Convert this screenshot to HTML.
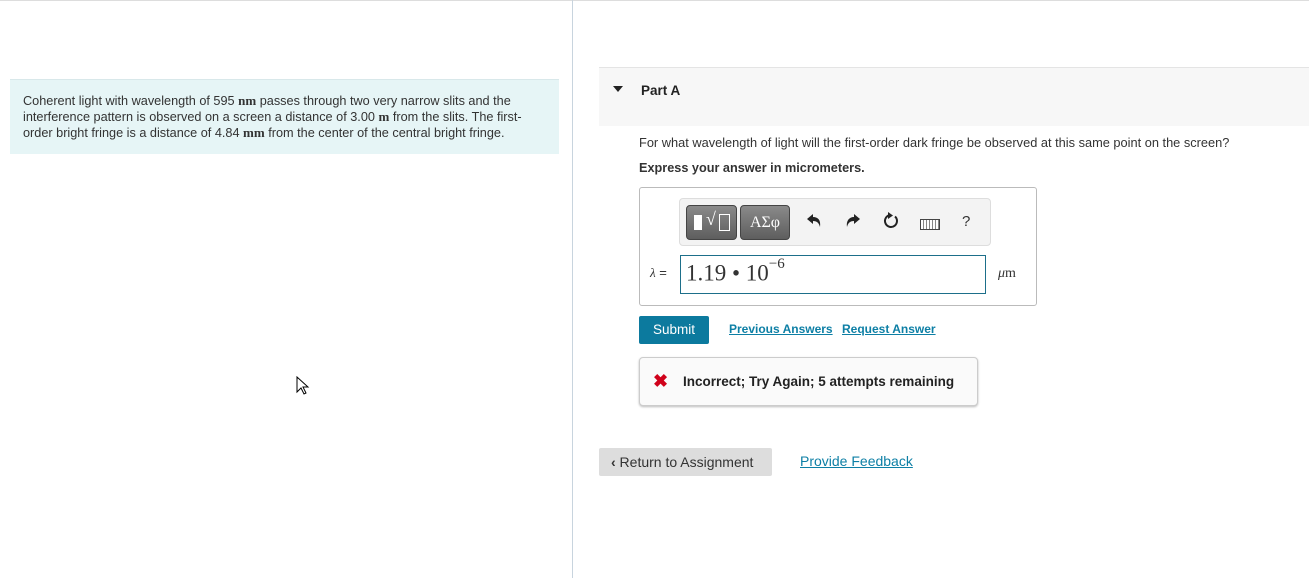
<!DOCTYPE html>
<html><head><style>
body{margin:0;width:1309px;height:578px;background:#fff;font-family:"Liberation Sans",sans-serif;position:relative;overflow:hidden}
.a{position:absolute}
.serif{font-family:"Liberation Serif",serif}
a{color:#0d7fa5;text-decoration:underline}
</style></head><body>
<div class="a" style="left:0;top:0;width:1309px;height:1px;background:#ddd"></div>
<div class="a" style="left:572px;top:0;width:1px;height:578px;background:#c8d4de"></div>
<div class="a" style="left:10px;top:79px;width:549px;height:74px;background:#e6f5f6;border-top:1px solid #d8e8ea"></div>
<div class="a" style="left:23px;top:93px;width:520px;font-size:12.7px;line-height:15px;color:#333">Coherent light with wavelength of 595 <span class="serif" style="font-size:13px;font-weight:bold">nm</span> passes through two very narrow slits and the interference pattern is observed on a screen a distance of 3.00 <span class="serif" style="font-size:13px;font-weight:bold">m</span> from the slits. The first-order bright fringe is a distance of 4.84 <span class="serif" style="font-size:13px;font-weight:bold">mm</span> from the center of the central bright fringe.</div>

<div class="a" style="left:599px;top:67px;width:710px;height:58px;background:#f7f7f7;border-top:1px solid #e4e4e4"></div>
<div class="a" style="left:613px;top:86px;width:0;height:0;border-left:5px solid transparent;border-right:5px solid transparent;border-top:6px solid #222"></div>
<div class="a" style="left:641px;top:83px;font-size:13.5px;font-weight:bold;color:#222">Part A</div>
<div class="a" style="left:639px;top:135px;font-size:12.8px;color:#333">For what wavelength of light will the first-order dark fringe be observed at this same point on the screen?</div>
<div class="a" style="left:639px;top:161px;font-size:12.7px;font-weight:bold;color:#333">Express your answer in micrometers.</div>

<div class="a" style="left:639px;top:187px;width:396px;height:117px;border:1px solid #bbb;border-radius:3px"></div>
<div class="a" style="left:679px;top:198px;width:310px;height:46px;background:#f3f3f3;border:1px solid #ddd;border-radius:4px"></div>
<div class="a" style="left:686px;top:205px;width:49px;height:33px;background:linear-gradient(#8a8a8a,#5e5e5e);border:1px solid #444;border-radius:4px"></div>
<div class="a" style="left:694px;top:215px;width:8px;height:15px;background:#fff"></div>
<div class="a serif" style="left:706px;top:209px;color:#fff;font-size:18px">√</div>
<div class="a" style="left:719px;top:214px;width:9px;height:15px;border:1px solid #fff"></div>
<div class="a" style="left:740px;top:205px;width:48px;height:33px;background:linear-gradient(#8a8a8a,#5e5e5e);border:1px solid #444;border-radius:4px;color:#fff;font-family:'Liberation Serif',serif;font-size:16px;text-align:center;line-height:33px">ΑΣφ</div>
<svg class="a" style="left:806px;top:213px" width="16" height="16" viewBox="0 0 16 16"><path d="M1 6 L7 1 V4 C12 4 15 7 14 14 C13 10 11 8 7 8 V11 Z" fill="#222"/></svg>
<svg class="a" style="left:845px;top:213px" width="16" height="16" viewBox="0 0 16 16"><path d="M15 6 L9 1 V4 C4 4 1 8 2 14 C3 10 5 8 9 8 V11 Z" fill="#222"/></svg>
<svg class="a" style="left:882px;top:212px" width="18" height="18" viewBox="0 0 18 18"><path d="M13 4.5 A6 6 0 1 1 7 3.3" fill="none" stroke="#222" stroke-width="2"/><path d="M6 0 L11 3.5 L6 7 Z" fill="#222"/></svg>
<div class="a" style="left:920px;top:219px;width:18px;height:9px;border:1px solid #444;background:repeating-linear-gradient(90deg,#fff 0 2px,#888 2px 3px)"></div>
<div class="a" style="left:962px;top:213px;font-size:15px;color:#333">?</div>
<div class="a" style="left:650px;top:265px;font-size:13px;color:#333"><i class="serif">λ</i> =</div>
<div class="a" style="left:680px;top:255px;width:304px;height:37px;border:1px solid #1d6f8a"></div>
<div class="a serif" style="left:686px;top:260px;font-size:23px;color:#333">1.19 • 10<sup style="font-size:15px;position:relative;top:-4px">−6</sup></div>
<div class="a serif" style="left:998px;top:266px;font-size:14px;color:#333"><i>μ</i>m</div>

<div class="a" style="left:639px;top:316px;width:70px;height:28px;background:#0c7a9e;border-radius:2px;color:#fff;font-size:13.5px;text-align:center;line-height:28px">Submit</div>
<a class="a" style="left:729px;top:322px;font-size:12px;font-weight:bold">Previous Answers</a>
<a class="a" style="left:842px;top:322px;font-size:12px;font-weight:bold">Request Answer</a>
<div class="a" style="left:639px;top:357px;width:337px;height:47px;border:1px solid #ccc;border-radius:4px;box-shadow:0 1px 2px #bbb;background:#fafafa"></div>
<div class="a" style="left:653px;top:371px;font-size:18px;font-weight:bold;color:#d0021b">✖</div>
<div class="a" style="left:683px;top:374px;font-size:13.5px;font-weight:bold;color:#222">Incorrect; Try Again; 5 attempts remaining</div>

<div class="a" style="left:599px;top:448px;width:173px;height:28px;background:#ddd;border-radius:2px;font-size:14px;color:#333;line-height:28px;text-indent:12px"><b>‹</b> Return to Assignment</div>
<a class="a" style="left:800px;top:453px;font-size:14px">Provide Feedback</a>

<svg class="a" style="left:296px;top:376px" width="14" height="20" viewBox="0 0 14 20"><path d="M1 1 L1 16 L5 12 L8 18 L10 17 L7 11 L12 11 Z" fill="#fff" stroke="#000" stroke-width="1"/></svg>
</body></html>
